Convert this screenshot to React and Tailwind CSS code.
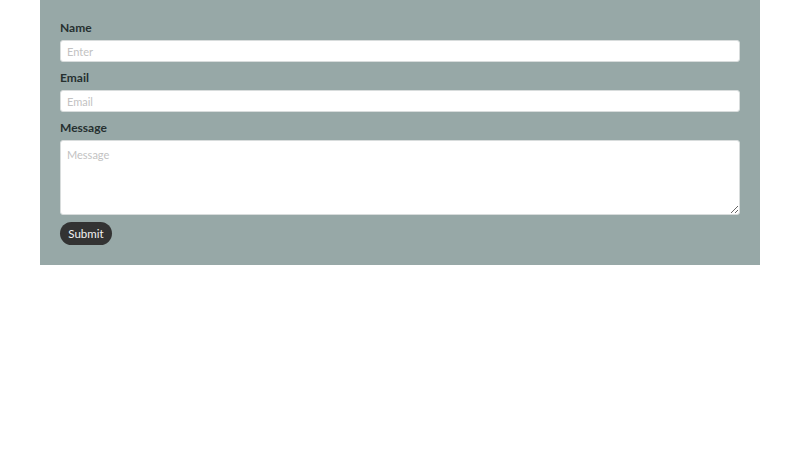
import { useState } from "react";

export default function App() {
  const [form, setForm] = useState({ name: "", email: "", message: "" });

  const handleChange = (e) => {
    const { name, value } = e.target;
    setForm((prev) => ({ ...prev, [name]: value }));
  };

  return (
    <div className="min-h-[450px] bg-white" style={{ fontFamily: "Lato, 'Open Sans', sans-serif" }}>
      <form
        className="mx-10 bg-[#97a8a7] px-5 pt-5 pb-5"
        onSubmit={(e) => e.preventDefault()}
      >
        <label className="block text-[12px] leading-[15px] font-bold text-[#263030]">Name</label>
        <input
          className="mt-[5px] block h-[22px] w-full rounded-[3px] border border-[#d8dcdc] bg-white px-[6px] text-[11px] text-[#333] placeholder:text-[#c2c2c2] outline-none"
          name="name"
          placeholder="Enter"
          value={form.name}
          onChange={handleChange}
        />

        <label className="mt-2 block text-[12px] leading-[15px] font-bold text-[#263030]">Email</label>
        <input
          className="mt-[5px] block h-[22px] w-full rounded-[3px] border border-[#d8dcdc] bg-white px-[6px] text-[11px] text-[#333] placeholder:text-[#c2c2c2] outline-none"
          name="email"
          placeholder="Email"
          value={form.email}
          onChange={handleChange}
        />

        <label className="mt-2 block text-[12px] leading-[15px] font-bold text-[#263030]">Message</label>
        <textarea
          className="mt-[5px] block h-[75px] w-full rounded-[3px] border border-[#d8dcdc] bg-white px-[6px] py-[7px] text-[11px] leading-[14px] text-[#333] placeholder:text-[#c2c2c2] outline-none"
          name="message"
          placeholder="Message"
          value={form.message}
          onChange={handleChange}
        />

        <button
          type="submit"
          className="mt-[7px] block h-[23px] w-[52px] rounded-full bg-[#333333] text-[11.5px] text-[#f2f2f2]"
        >
          Submit
        </button>
      </form>
    </div>
  );
}
